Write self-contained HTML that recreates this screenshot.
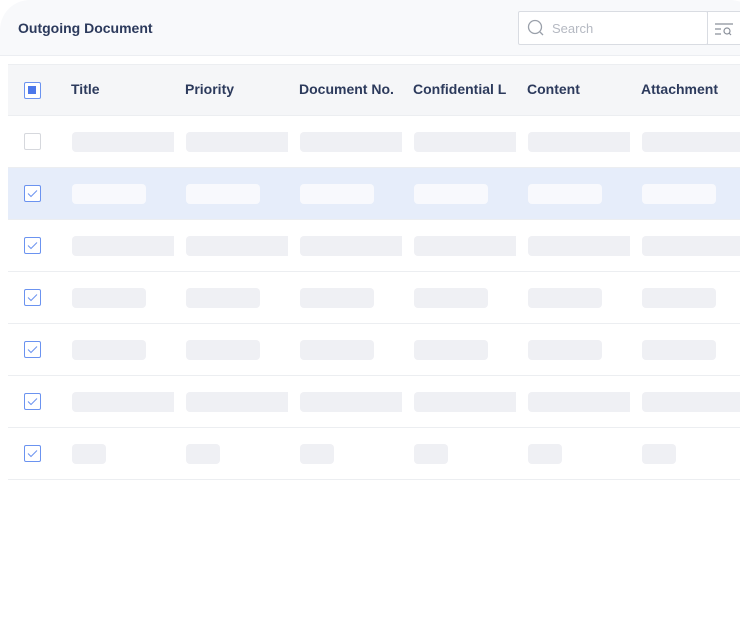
<!DOCTYPE html>
<html><head><style>
*{margin:0;padding:0;box-sizing:border-box}
body{width:740px;height:640px;background:#fff;font-family:"Liberation Sans",sans-serif;position:relative;overflow:hidden}
.hdr{position:absolute;left:0;top:0;width:760px;height:56px;background:#f8f9fb;border-radius:30px 30px 0 0;border-bottom:1px solid #eceef2}
.ttl{position:absolute;left:18px;top:20px;font-size:14px;font-weight:bold;color:#2c3a5c}
.search{position:absolute;left:518px;top:11px;width:190px;height:34px;background:#fff;border:1px solid #d9dce2;border-radius:2px}
.search span{position:absolute;left:33px;top:9px;font-size:13px;color:#b5b9c2}
.fbtn{position:absolute;left:707px;top:11px;width:40px;height:34px;background:#fff;border:1px solid #d9dce2}
.th{position:absolute;top:64px;height:52px;background:#f5f6f8;border-top:1px solid #eceef1;border-bottom:1px solid #eceef1;border-right:1px solid #eceef1;font-size:14px;font-weight:bold;color:#2c3a5c;padding:16px 0 0 11px;white-space:nowrap;overflow:hidden}
.row{position:absolute;left:8px;width:740px;height:52px;border-bottom:1px solid #eceef1}
.cb{position:absolute;left:16px;top:17px;width:17px;height:17px;border:1px solid #6b93f0;border-radius:2px;background:#fff}
.bar{position:absolute;top:16px;height:20px;background:#eff0f4;border-radius:4px}
</style></head><body>
<div class="hdr"></div>
<div class="ttl">Outgoing Document</div>
<div class="search"><svg style="position:absolute;left:8px;top:7px" width="18" height="18" viewBox="0 0 18 18"><circle cx="8" cy="8" r="6.5" fill="none" stroke="#9aa0aa" stroke-width="1.3"/><path d="M13 13l3 3" stroke="#9aa0aa" stroke-width="1.3"/></svg><span>Search</span></div>
<div class="fbtn"><svg style="position:absolute;left:7px;top:10px" width="22" height="14" viewBox="0 0 22 14"><path d="M0 2h18M0 7h6M0 12h6" stroke="#8a909a" stroke-width="1.2"/><circle cx="12" cy="9" r="3" fill="none" stroke="#8a909a" stroke-width="1.2"/><path d="M14 11l2 2" stroke="#8a909a" stroke-width="1.2"/></svg></div>
<div class="th" style="left:8px;width:53px;padding:0"><div style="position:absolute;left:16px;top:17px;width:17px;height:17px;border:1.5px solid #6b93f0;border-radius:2px;background:#fff"><div style="position:absolute;left:3px;top:3px;width:8px;height:8px;background:#4d78ea"></div></div></div>
<div class="th" style="left:60px;width:115px">Title</div>
<div class="th" style="left:174px;width:115px">Priority</div>
<div class="th" style="left:288px;width:115px">Document No.</div>
<div class="th" style="left:402px;width:115px">Confidential L</div>
<div class="th" style="left:516px;width:115px">Content</div>
<div class="th" style="left:630px;width:115px">Attachment</div>
<div id="rows"></div>
<script>
var types=['L','S','L','S','S','L','T'];var h='';
types.forEach(function(t,i){var y=116+i*52;var hl=i==1;
h+='<div class="row" style="top:'+y+'px;'+(hl?'background:#e6edfa;':'')+'">';
h+='<div class="cb"'+(i==0?' style="border-color:#d6d8dd"':'')+'>'+(i>0?'<svg width="15" height="15" viewBox="0 0 15 15"><path d="M3 7.5l3 3 6-6" fill="none" stroke="#6b93f0" stroke-width="1"/></svg>':'')+'</div>';
for(var c=0;c<6;c++){var x=64+c*114;var w=t=='L'?102:t=='S'?74:34;
h+='<div class="bar" style="left:'+x+'px;width:'+w+'px;'+(hl?'background:#f8f9fd;':'')+(t=='L'?'border-radius:4px 0 0 4px;':'')+'"></div>';}
h+='</div>';});
document.getElementById('rows').innerHTML=h;
</script>
</body></html>
